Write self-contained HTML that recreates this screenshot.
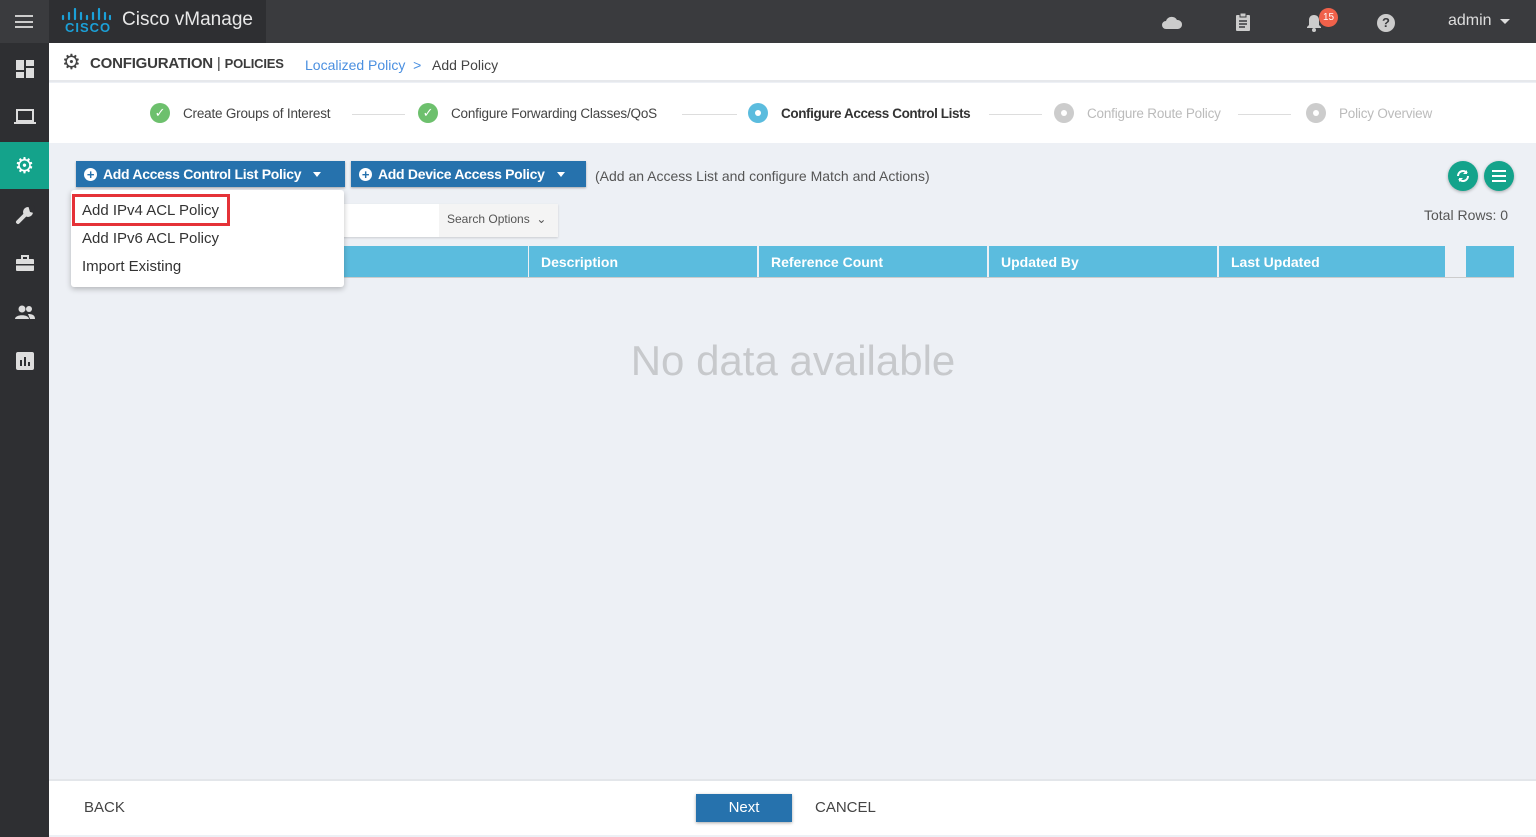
<!DOCTYPE html>
<html><head><meta charset="utf-8"><style>
*{box-sizing:border-box;margin:0;padding:0}
body{width:1536px;height:837px;overflow:hidden;font-family:"Liberation Sans",sans-serif;background:#edf0f5;position:relative;color:#444}
.top{position:absolute;left:0;top:0;width:1536px;height:43px;background:#3a3b3e}
.logo{position:absolute;left:49px;top:0;width:217px;height:43px;background:#2e2f32}
.side{position:absolute;left:0;top:43px;width:49px;height:794px;background:#2e2f32}
.side .ic{position:absolute;left:0;width:49px;height:47px;display:flex;align-items:center;justify-content:center}
.hdr{position:absolute;left:49px;top:43px;width:1487px;height:39px;background:#fff;border-bottom:2px solid #e6e8ec}
.steps{position:absolute;left:49px;top:83px;width:1487px;height:60px;background:#fff}
.step{position:absolute;top:20px;font-size:13.5px;display:flex;align-items:center;white-space:nowrap;letter-spacing:-0.2px}
.step .c{width:20px;height:20px;border-radius:50%;margin-right:13px;display:flex;align-items:center;justify-content:center}
.line{position:absolute;top:31px;height:1px;background:#ddd}
.btn{position:absolute;top:161px;height:26px;background:#2672ad;color:#fff;font-size:14px;font-weight:bold;display:flex;align-items:center;padding-left:8px;box-shadow:0 1px 2px rgba(0,0,0,.3);white-space:nowrap;letter-spacing:-0.3px}
.plus{width:13px;height:13px;border-radius:50%;background:#fff;color:#2672ad;font-size:13px;line-height:13px;text-align:center;margin-right:6px;font-weight:bold;flex:none}
.caret{width:0;height:0;border-left:4px solid transparent;border-right:4px solid transparent;border-top:5px solid #fff;margin-left:12px;flex:none}
.th{position:absolute;top:246px;height:32px;background:#5bbcde;color:#fff;font-weight:bold;font-size:14px;line-height:32px;padding-left:12px;border-right:2px solid #edf0f5}
.fab{position:absolute;top:161px;width:30px;height:30px;border-radius:50%;background:#14a38b;box-shadow:0 1px 3px rgba(0,0,0,.3)}
</style></head><body>
<div class="top"></div>
<div class="logo">
<svg style="position:absolute;left:12px;top:7px" width="50" height="16"><g stroke="#1ba0d7" stroke-width="2.2" stroke-linecap="round"><line x1="2" y1="9" x2="2" y2="12"/><line x1="8" y1="6" x2="8" y2="12"/><line x1="14" y1="2" x2="14" y2="12"/><line x1="20" y1="6" x2="20" y2="12"/><line x1="26" y1="9" x2="26" y2="12"/><line x1="32" y1="6" x2="32" y2="12"/><line x1="38" y1="2" x2="38" y2="12"/><line x1="44" y1="6" x2="44" y2="12"/><line x1="49" y1="9" x2="49" y2="12"/></g></svg>
<div style="position:absolute;left:16px;top:20px;color:#1ba0d7;font-weight:bold;font-size:13px;letter-spacing:1px">CISCO</div>
<div style="position:absolute;left:73px;top:9px;color:#e8e8e8;font-size:19px">Cisco vManage</div>
</div>
<div style="position:absolute;left:15px;top:15px;width:18px;height:13px;border-top:2px solid #ccc;border-bottom:2px solid #ccc"><div style="margin-top:3.5px;height:2px;background:#ccc"></div></div>
<svg style="position:absolute;left:1161px;top:14px" width="22" height="16"><path d="M5 15a4 4 0 0 1 0-8 6 6 0 0 1 11-1 4.5 4.5 0 0 1 1 9z" fill="#ccc"/></svg>
<svg style="position:absolute;left:1235px;top:12px" width="16" height="20"><rect x="1" y="3" width="14" height="16" rx="1" fill="#ccc"/><rect x="5" y="1" width="6" height="4" fill="#ccc" stroke="#3a3b3e"/><g stroke="#3a3b3e" stroke-width="1.5"><line x1="4" y1="9" x2="12" y2="9"/><line x1="4" y1="12" x2="12" y2="12"/><line x1="4" y1="15" x2="10" y2="15"/></g></svg>
<svg style="position:absolute;left:1306px;top:14px" width="16" height="18"><path d="M8 1c-3 0-5 2-5 5v5l-2 2v1h14v-1l-2-2V6c0-3-2-5-5-5z" fill="#ccc"/><circle cx="8" cy="16" r="2" fill="#ccc"/></svg>
<div style="position:absolute;left:1319px;top:8px;width:19px;height:19px;border-radius:50%;background:#f0614a;color:#fff;font-size:10px;line-height:19px;text-align:center">15</div>
<div style="position:absolute;left:1377px;top:14px;width:18px;height:18px;border-radius:50%;background:#ccc;color:#3a3b3e;font-weight:bold;font-size:13px;line-height:18px;text-align:center">?</div>
<div style="position:absolute;left:1448px;top:12px;color:#ddd;font-size:16px">admin</div>
<div style="position:absolute;left:1500px;top:19px;border-left:5px solid transparent;border-right:5px solid transparent;border-top:5px solid #ddd"></div>
<div class="side">
<div class="ic" style="top:2px"><svg width="18" height="18" fill="#ddd"><rect x="0" y="0" width="8" height="10"/><rect x="10" y="0" width="8" height="6"/><rect x="0" y="12" width="8" height="6"/><rect x="10" y="8" width="8" height="10"/></svg></div>
<div class="ic" style="top:50px"><svg width="22" height="16" fill="#ddd"><rect x="3" y="1" width="16" height="11" fill="none" stroke="#ddd" stroke-width="2"/><rect x="0" y="13" width="22" height="2"/></svg></div>
<div class="ic" style="top:99px;background:#14a38b"><span style="color:#fff;font-size:22px">⚙</span></div>
<div class="ic" style="top:148px"><svg width="20" height="20"><path d="M3 17L11 9" stroke="#ddd" stroke-width="4" stroke-linecap="round"/><circle cx="13" cy="7" r="5" fill="#ddd"/><path d="M13 0L20 1L19 8L15 7z" fill="#2e2f32"/></svg></div>
<div class="ic" style="top:196px"><svg width="18" height="16" fill="#ddd"><rect x="0" y="4" width="18" height="12" rx="1"/><rect x="6" y="1" width="6" height="4" fill="none" stroke="#ddd" stroke-width="2"/><rect x="0" y="9" width="18" height="1.5" fill="#2e2f32"/></svg></div>
<div class="ic" style="top:245px"><svg width="22" height="14" fill="#ddd"><circle cx="8" cy="4" r="3.5"/><circle cx="15" cy="4" r="3"/><path d="M1 14c0-5 14-5 14 0z"/><path d="M14 9c4 0 7 1 7 5h-5z"/></svg></div>
<div class="ic" style="top:294px"><svg width="18" height="18" fill="#ddd"><rect width="18" height="18" rx="2"/><g fill="#2e2f32"><rect x="4" y="8" width="2" height="6"/><rect x="8" y="5" width="2" height="9"/><rect x="12" y="10" width="2" height="4"/></g></svg></div>
</div>
<div class="hdr">
<span style="position:absolute;left:13px;top:7px;font-size:21px;color:#444">⚙</span>
<span style="position:absolute;left:41px;top:12px;font-size:15px;font-weight:bold;color:#3b3b3b;white-space:nowrap;letter-spacing:-0.2px">CONFIGURATION <span style="font-weight:normal">|</span> <span style="font-size:13px">POLICIES</span></span>
<span style="position:absolute;left:256px;top:14px;font-size:14px;color:#4a8fe0">Localized Policy &nbsp;&gt;</span>
<span style="position:absolute;left:383px;top:14px;font-size:14px;color:#444">Add Policy</span>
</div>
<div class="steps">
<div class="step" style="left:101px"><div class="c" style="background:#6dc06d;color:#fff;font-size:13px">✓</div>Create Groups of Interest</div>
<div class="line" style="left:303px;width:53px"></div>
<div class="step" style="left:369px"><div class="c" style="background:#6dc06d;color:#fff;font-size:13px">✓</div>Configure Forwarding Classes/QoS</div>
<div class="line" style="left:633px;width:55px"></div>
<div class="step" style="left:699px;font-weight:bold;color:#333;letter-spacing:-0.4px"><div class="c" style="background:#5bbcde"><div style="width:6px;height:6px;border-radius:50%;background:#fff"></div></div>Configure Access Control Lists</div>
<div class="line" style="left:940px;width:53px"></div>
<div class="step" style="left:1005px;color:#bbb"><div class="c" style="background:#ccc"><div style="width:6px;height:6px;border-radius:50%;background:#fff"></div></div>Configure Route Policy</div>
<div class="line" style="left:1189px;width:53px"></div>
<div class="step" style="left:1257px;color:#bbb"><div class="c" style="background:#ccc"><div style="width:6px;height:6px;border-radius:50%;background:#fff"></div></div>Policy Overview</div>
</div>
<div class="btn" style="left:76px;width:269px"><div class="plus">+</div>Add Access Control List Policy<div class="caret"></div></div>
<div class="btn" style="left:351px;width:235px"><div class="plus">+</div>Add Device Access Policy<div class="caret"></div></div>
<div style="position:absolute;left:595px;top:168px;font-size:14px;color:#555">(Add an Access List and configure Match and Actions)</div>
<div class="fab" style="left:1448px"><svg width="30" height="30"><path d="M10 15a5 5 0 0 1 9-3M20 15a5 5 0 0 1-9 3" stroke="#fff" stroke-width="2" fill="none"/><path d="M19 9v4h-4zM11 21v-4h4z" fill="#fff"/></svg></div>
<div class="fab" style="left:1484px"><svg width="30" height="30" stroke="#fff" stroke-width="2"><line x1="8" y1="10" x2="22" y2="10"/><line x1="8" y1="15" x2="22" y2="15"/><line x1="8" y1="20" x2="22" y2="20"/></svg></div>
<div style="position:absolute;left:340px;top:204px;width:218px;height:33px;background:#fff;box-shadow:0 1px 2px rgba(0,0,0,.15)"><div style="position:absolute;left:99px;top:0;width:119px;height:33px;background:#f4f4f4;font-size:12px;color:#555;line-height:31px;padding-left:8px">Search Options &nbsp;⌄</div></div>
<div style="position:absolute;left:1424px;top:207px;font-size:14px;color:#555">Total Rows: 0</div>
<div class="th" style="left:76px;width:454px"></div>
<div class="th" style="left:529px;width:230px">Description</div>
<div class="th" style="left:759px;width:230px">Reference Count</div>
<div class="th" style="left:989px;width:230px">Updated By</div>
<div class="th" style="left:1219px;width:228px">Last Updated</div>
<div class="th" style="left:1466px;width:48px;border:0"></div>
<div style="position:absolute;left:76px;top:277px;width:1438px;height:1px;background:#ccc"></div>
<div style="position:absolute;left:0;top:337px;width:1586px;text-align:center;font-size:42px;color:#c7c9cc">No data available</div>
<div style="position:absolute;left:71px;top:190px;width:273px;height:97px;background:#fff;border-radius:3px;box-shadow:0 2px 6px rgba(0,0,0,.25);font-size:15px;color:#333">
<div style="position:absolute;left:1px;top:4px;width:158px;height:32px;border:3px solid #e53238"></div>
<div style="position:absolute;left:11px;top:12px">Add IPv4 ACL Policy</div>
<div style="position:absolute;left:11px;top:40px">Add IPv6 ACL Policy</div>
<div style="position:absolute;left:11px;top:68px">Import Existing</div>
</div>
<div style="position:absolute;left:49px;top:779px;width:1487px;height:56px;background:#fff;border-top:2px solid #e3e6ea"></div>
<div style="position:absolute;left:84px;top:799px;font-size:15px;color:#444">BACK</div>
<div style="position:absolute;left:696px;top:794px;width:96px;height:28px;background:#2672ad;color:#fff;font-size:15px;line-height:28px;text-align:center;box-shadow:0 1px 3px rgba(0,0,0,.35)">Next</div>
<div style="position:absolute;left:815px;top:799px;font-size:15px;color:#444">CANCEL</div>
</body></html>
